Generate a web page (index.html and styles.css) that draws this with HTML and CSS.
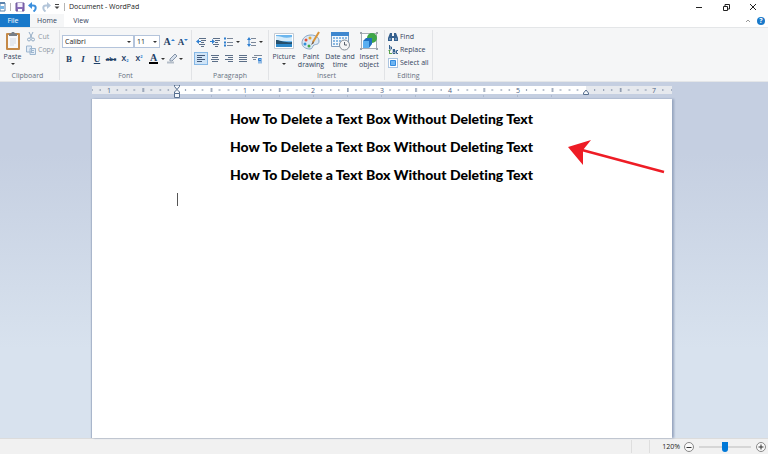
FILE: index.html
```html
<!DOCTYPE html>
<html lang="en">
<head>
    <meta charset="UTF-8">
    <meta name="viewport" content="width=device-width, initial-scale=1.0">
    <title>Document - WordPad</title>
    <link rel="stylesheet" href="styles.css">
</head>
<body>
    <header class="titlebar">
        <svg class="app-icon" width="6" height="12" viewBox="0 0 6 12"><path d="M0 2h5v8H0z" fill="#fff" stroke="#5b83ad"/><path d="M0 1h5v2H0z" fill="#5b83ad"/><path d="M0 5h4v3H0z" fill="#79b5e5"/></svg>
        <span class="divider"></span>
        <div class="quick">
            <button aria-label="Save"><svg width="10" height="10" viewBox="0 0 10 10"><path d="M1 1h8v8H1z" fill="#8a6cb8" stroke="#6b5598"/><path d="M2.500 1h5v4h-5z" fill="#f3eefa"/><path d="M3 7h4v2.500H3z" fill="#fff"/></svg></button>
            <button aria-label="Undo"><svg width="10" height="10" viewBox="0 0 10 10"><path d="M2 3.500h3c3.500 0 3.500 4 .5 6" fill="none" stroke="#3b8fdd" stroke-width="2"/><path d="M0 3.500L4 0v7z" fill="#3b8fdd"/></svg></button>
            <button aria-label="Redo"><svg width="10" height="10" viewBox="0 0 10 10"><path d="M8 3.500H5c-3.500 0-3.500 4-.5 6" fill="none" stroke="#b3c5d9" stroke-width="2"/><path d="M10 3.500L6 0v7z" fill="#b3c5d9"/></svg></button>
            <button aria-label="Customize"><svg width="6" height="6" viewBox="0 0 6 6"><path d="M1 .5h4" stroke="#444"/><path d="M.5 2.500h5L3 5z" fill="#444"/></svg></button>
        </div>
        <span class="divider"></span>
        <h1 class="title">Document - WordPad</h1>
        <div class="window-buttons">
            <button aria-label="Minimize"><svg width="8" height="8" viewBox="0 0 8 8"><path d="M1 4.500h6" stroke="#222"/></svg></button>
            <button aria-label="Restore"><svg width="8" height="8" viewBox="0 0 8 8"><path d="M1.500 3.500h4v4h-4zM3 3V1.500h4.500V6H6" fill="none" stroke="#222"/></svg></button>
            <button aria-label="Close"><svg width="8" height="8" viewBox="0 0 8 8"><path d="M1 1l6 6M7 1L1 7" stroke="#222"/></svg></button>
        </div>
    </header>

    <nav class="tabs">
        <button class="tab file">File</button>
        <button class="tab active">Home</button>
        <button class="tab view">View</button>
        <div class="tab-tools">
            <button aria-label="Collapse ribbon"><svg width="6" height="6" viewBox="0 0 6 6"><path d="M1 4l2-2 2 2" fill="none" stroke="#999"/></svg></button>
            <button class="help" aria-label="Help">?</button>
        </div>
    </nav>

    <main class="ribbon">
        <section class="group clipboard">
            <div class="group-body">
                <button class="big paste">
                    <svg width="18" height="20" viewBox="0 0 18 20"><rect x="2" y="2" width="14" height="17" rx="1" fill="#c58a48"/><path d="M4 4h10v13H4z" fill="#f7f8fa"/><path d="M5 5V2.500h2L8 1h2l1 1.500h2V5z" fill="#777f88"/><path d="M6 8h6M6 10h6M6 12h6M6 14h4" stroke="#d2d9e2"/></svg>
                    <span>Paste</span>
                    <i class="arrow"></i>
                </button>
                <div class="stack muted">
                    <button class="line"><svg width="10" height="10" viewBox="0 0 10 10"><path d="M3 0l3 6M7 0L4 6" stroke="#92abc4"/><circle cx="3" cy="7.500" r="1.500" fill="none" stroke="#92abc4"/><circle cx="7" cy="7.500" r="1.500" fill="none" stroke="#92abc4"/></svg><span>Cut</span></button>
                    <button class="line"><svg width="10" height="10" viewBox="0 0 10 10"><path d="M.5 1h5v6h-5zM4 3.500h5.500v6H4z" fill="#e4edf7" stroke="#9db6cf"/><path d="M5 5.500h3M5 7.500h3" stroke="#9db6cf"/></svg><span>Copy</span></button>
                </div>
            </div>
            <h2>Clipboard</h2>
        </section>

        <section class="group font">
            <div class="group-body rows">
                <div class="row combos">
                    <label class="combo family"><select aria-label="Font family"><option>Calibri</option></select><i class="arrow"></i></label>
                    <label class="combo size"><select aria-label="Font size"><option>11</option></select><i class="arrow"></i></label>
                    <button class="glyph grow" aria-label="Grow font">A<svg width="4" height="8" viewBox="0 0 4 8"><path d="M0 3l2-2 2 2z" fill="#2f7fd0"/></svg></button>
                    <button class="glyph shrink" aria-label="Shrink font">A<svg width="4" height="8" viewBox="0 0 4 8"><path d="M0 1h4L2 3z" fill="#2f7fd0"/></svg></button>
                </div>
                <div class="row styles">
                    <button class="glyph"><b>B</b></button>
                    <button class="glyph"><em>I</em></button>
                    <button class="glyph"><u>U</u></button>
                    <button class="glyph small"><s>abc</s></button>
                    <button class="glyph small">X<sub>2</sub></button>
                    <button class="glyph small">X<sup>2</sup></button>
                    <button class="glyph color">A</button>
                    <i class="arrow"></i>
                    <button class="glyph" aria-label="Highlight"><svg width="11" height="11" viewBox="0 0 11 11"><path d="M3 6l5-5 2 2-5 5H3z" fill="#d7e0ec" stroke="#8494a8"/><path d="M0 9.500h7" stroke="#b5bec9" stroke-width="2"/></svg></button>
                    <i class="arrow"></i>
                </div>
            </div>
            <h2>Font</h2>
        </section>

        <section class="group paragraph">
            <div class="group-body rows">
                <div class="row">
                    <button class="tool" aria-label="Decrease indent"><svg width="10" height="10" viewBox="0 0 10 10"><path d="M3 1.500h7M5 3.500h5M5 5.500h3M3 7.500h6M5 9.500h3" stroke="#5c6f88"/><path d="M0 4.500L3 2v5z" fill="#2f7fd0"/><path d="M2 4.500h3" stroke="#2f7fd0"/></svg></button>
                    <button class="tool" aria-label="Increase indent"><svg width="10" height="10" viewBox="0 0 10 10"><path d="M3 1.500h7M5 3.500h5M5 5.500h3M3 7.500h6M5 9.500h3" stroke="#5c6f88"/><path d="M5 4.500L2 2v5z" fill="#2f7fd0"/><path d="M0 4.500h3" stroke="#2f7fd0"/></svg></button>
                    <button class="tool" aria-label="Bullets"><svg width="10" height="10" viewBox="0 0 10 10"><path d="M3 1.500h6M3 5.500h6M3 8.500h6" stroke="#7b8798"/><path d="M0 1.500h2M0 5.500h2M0 8.500h2" stroke="#2f7fd0" stroke-width="2"/></svg></button>
                    <i class="arrow"></i>
                    <button class="tool spaced" aria-label="Line spacing"><svg width="10" height="10" viewBox="0 0 10 10"><path d="M4 1.500h5M4 5.500h5M4 8.500h5" stroke="#7b8798"/><path d="M0 3l2-3 2 3zM0 7h4l-2 3z" fill="#2f7fd0"/><path d="M2 2v6" stroke="#2f7fd0"/></svg></button>
                    <i class="arrow"></i>
                </div>
                <div class="row">
                    <button class="tool selected" aria-label="Align left"><svg width="10" height="8" viewBox="0 0 10 8"><path d="M1 .5h8M1 2.500h5M1 4.500h8M1 6.500h5" stroke="#43597a"/></svg></button>
                    <button class="tool" aria-label="Center"><svg width="10" height="8" viewBox="0 0 10 8"><path d="M1 .5h8M2 2.500h6M1 4.500h8M2 6.500h6" stroke="#5c6f88"/></svg></button>
                    <button class="tool" aria-label="Align right"><svg width="10" height="8" viewBox="0 0 10 8"><path d="M1 .5h8M4 2.500h5M1 4.500h8M4 6.500h5" stroke="#5c6f88"/></svg></button>
                    <button class="tool" aria-label="Justify"><svg width="10" height="8" viewBox="0 0 10 8"><path d="M1 .5h8M1 2.500h8M1 4.500h8M1 6.500h8" stroke="#5c6f88"/></svg></button>
                    <button class="tool" aria-label="Paragraph"><svg width="10" height="10" viewBox="0 0 10 10"><path d="M2 1.500h8M0 3.500h5M1 5.500h3" stroke="#7b8798"/><path d="M9 4.500H6.500v2H9M7 4v5.500M9 4v5.500" fill="none" stroke="#2f7fd0"/></svg></button>
                </div>
            </div>
            <h2>Paragraph</h2>
        </section>

        <section class="group insert">
            <div class="group-body">
                <button class="big">
                    <svg width="20" height="20" viewBox="0 0 20 20"><path d="M.5 2.500h19v15H.5z" fill="#fff" stroke="#c3cbd4"/><path d="M2 4h16v12H2z" fill="#6bb6ee"/><path d="M2 5c5 0 8 3 16 1v4H2z" fill="#d5ecfb"/><path d="M2 9c4 0 8 3 16 2v2H2z" fill="#25506e"/><path d="M2 13h16v3H2z" fill="#2c87c9"/></svg>
                    <span>Picture</span>
                    <i class="arrow"></i>
                </button>
                <button class="big paint">
                    <svg width="20" height="20" viewBox="0 0 20 20"><path d="M10 4C4 4 1 8 1 12s4 6 8 6c3 0 2-3 4-4s5 0 5-4-4-6-8-6z" fill="#dce9f5" stroke="#87a5c4"/><circle cx="5" cy="9" r="1.500" fill="#e0503c"/><circle cx="9" cy="7" r="1.500" fill="#e7a52d"/><circle cx="4" cy="13" r="1.500" fill="#338fd8"/><circle cx="8" cy="15" r="1.500" fill="#43a747"/><path d="M18 1l-6 10" stroke="#d99438" stroke-width="2"/><path d="M12 10l-2 4 3-2z" fill="#735236"/></svg>
                    <span>Paint<br>drawing</span>
                </button>
                <button class="big date">
                    <svg width="20" height="20" viewBox="0 0 20 20"><path d="M1.500 1.500h17v14h-17z" fill="#f3f8fd" stroke="#7f9dbe"/><path d="M1 1h18v4H1z" fill="#3e87cf"/><path d="M3 7h14M3 10h14M3 13h10" stroke="#89b9e3" stroke-width="2" stroke-dasharray="2 1"/><circle cx="14.500" cy="14" r="5" fill="#f5f6f7" stroke="#848c95"/><path d="M14.500 11v3H17" fill="none" stroke="#59626e"/></svg>
                    <span>Date and<br>time</span>
                </button>
                <button class="big object">
                    <svg width="20" height="20" viewBox="0 0 20 20"><path d="M2.500 2.500h15v15h-15z" fill="#fff" stroke="#a6adb5"/><circle cx="13" cy="7" r="5" fill="#3fa648"/><path d="M4 10l3-3h6v6l-3 4H4z" fill="#1f6fbe"/><path d="M4 10h6v7H4z" fill="#5aaff0"/><path d="M1 1h2v2H1zM17 1h2v2h-2zM1 17h2v2H1zM17 17h2v2h-2z" fill="#9ba3ac"/></svg>
                    <span>Insert<br>object</span>
                </button>
            </div>
            <h2>Insert</h2>
        </section>

        <section class="group editing">
            <div class="group-body stack">
                <button class="line"><svg width="10" height="10" viewBox="0 0 10 10"><path d="M2 1h2v3h2V1h2l2 5v3H6V6H4v3H0V6z" fill="#35608e"/><path d="M1 7h2M7 7h2" stroke="#9bc3e7"/></svg><span>Find</span></button>
                <button class="line"><svg width="10" height="10" viewBox="0 0 10 10"><path d="M1.500 0v4h2V2h-2M7 4.500h-2v1h2v3H5v-2h2M10 5.500H8.500v3H10" fill="none" stroke="#35608e"/><path d="M0 6h3L1.500 4.500zM1 6h1v2h2v1H1z" fill="#58a04c"/></svg><span>Replace</span></button>
                <button class="line"><svg width="10" height="10" viewBox="0 0 10 10"><path d="M.5 .5h9v9h-9z" fill="#fff" stroke="#5d8fc4" stroke-dasharray="1 1"/><path d="M2.500 2.500h5v5h-5z" fill="#6db3f0" stroke="#338be0"/></svg><span>Select all</span></button>
            </div>
            <h2>Editing</h2>
        </section>
    </main>

    <div class="workspace">
        <div class="sheet">
            <svg class="ruler" width="580" height="13" viewBox="0 0 580 13">
                <defs>
                    <pattern id="inch" x="85" y="0" width="68.2" height="13" patternUnits="userSpaceOnUse">
                        <path d="M8.500 4v2M17.500 4v2M25.500 4v2M42.500 4v2M51.500 4v2M59.500 4v2" stroke="#8594ab"/>
                        <path d="M34.500 3v4" stroke="#4f6484"/>
                    </pattern>
                </defs>
                <rect y="1" width="580" height="8" fill="#e6e9ee"/>
                <rect x="85" y="1" width="409" height="8" fill="#fff"/>
                <rect y="0" width="580" height="13" fill="url(#inch)"/>
                <path d="M119.500 10v2M153.500 10v2M187.500 10v2M221.500 10v2M255.500 10v2M289.500 10v2M323.500 10v2M357.500 10v2M391.500 10v2M425.500 10v2M459.500 10v2" stroke="#adb9ce"/>
                <g class="numbers">
                    <text x="17" y="8">1</text>
                    <text x="153" y="8">1</text>
                    <text x="221" y="8">2</text>
                    <text x="290" y="8">3</text>
                    <text x="358" y="8">4</text>
                    <text x="426" y="8">5</text>
                    <text x="562" y="8">7</text>
                </g>
                <path d="M82.500 0h5v1.500L85 4.500l-2.500-3zM82.500 8.500V7L85 4.500 87.500 7v1.500zM82.500 8.500h5v4h-5z" fill="#f4f7fb" stroke="#566e8e"/>
                <path d="M491.500 9.500V8l2.500-3 2.500 3v1.500z" fill="#f4f7fb" stroke="#566e8e"/>
            </svg>
            <article class="page">
                <p>How To Delete a Text Box Without Deleting Text</p>
                <p>How To Delete a Text Box Without Deleting Text</p>
                <p>How To Delete a Text Box Without Deleting Text</p>
                <div class="caret"></div>
                <svg class="pointer" width="98" height="36" viewBox="0 0 98 36"><path d="M14 11l82 22" stroke="#ee1c25" stroke-width="2.400"/><path d="M0 8l23-7-8 10 0 15z" fill="#ee1c25"/></svg>
            </article>
        </div>
    </div>

    <footer class="statusbar">
        <span class="cell"></span>
        <label class="zoom" for="zoom">120%</label>
        <button aria-label="Zoom out"><svg width="10" height="10" viewBox="0 0 10 10"><circle cx="5" cy="5" r="4.500" fill="#fafafa" stroke="#888"/><path d="M2.500 5.500h5" stroke="#333"/></svg></button>
        <input type="range" id="zoom" min="0" max="100" value="50">
        <button aria-label="Zoom in"><svg width="10" height="10" viewBox="0 0 10 10"><circle cx="5" cy="5" r="4.500" fill="#fafafa" stroke="#888"/><path d="M2.500 5h5M5 2.500v5" stroke="#333"/></svg></button>
    </footer>
</body>
</html>
```
FILE: styles.css
```css
* {
    box-sizing: border-box;
}
body {
    margin: 0;
    height: 100vh;
    display: flex;
    flex-direction: column;
    font-family: "Open Sans", "Noto Sans", sans-serif;
    font-size: 7px;
    line-height: 8px;
    color: #33435c;
    background: #fff;
}
button {
    display: flex;
    align-items: center;
    justify-content: center;
    padding: 0;
    border: none;
    background: none;
    color: inherit;
    font: inherit;
}
svg {
    display: block;
    flex: none;
}
h1,
h2,
p {
    margin: 0;
    font-size: 7px;
    font-weight: normal;
}
.arrow {
    flex: none;
    width: 4px;
    border: 2px solid transparent;
    border-top-color: #333;
    border-bottom: none;
}

/* title bar */
.titlebar {
    display: flex;
    align-items: center;
    height: 14px;
    color: #222;
}
.divider {
    width: 1px;
    height: 8px;
    margin: 0 4px;
    background: #b5b5b5;
}
.quick {
    display: flex;
    gap: 3px;
}
.title {
    flex: 1;
}
.window-buttons {
    display: flex;
    gap: 19px;
    padding-right: 11px;
}

/* tabs */
.tabs {
    display: flex;
    height: 13px;
}
.tab {
    width: 34px;
}
.file {
    width: 30px;
    padding-right: 4px;
    background: #1979ca;
    color: #fff;
}
.active {
    background: #f5f6f7;
}
.tab-tools {
    display: flex;
    align-items: center;
    gap: 6px;
    margin-left: auto;
    padding-right: 3px;
}
.help {
    width: 8px;
    height: 8px;
    border-radius: 50%;
    background: #1979ca;
    color: #fff;
    font-weight: bold;
}

/* ribbon */
.ribbon {
    display: flex;
    height: 55px;
    background: #f5f6f7;
    border-top: 1px solid #e4e6e8;
    border-bottom: 1px solid #e4e6e8;
}
.group {
    display: flex;
    flex-direction: column;
    margin: 2px 0 1px;
    border-right: 1px solid #e1e3e6;
}
.group h2 {
    text-align: center;
    color: #687383;
}
.group-body {
    display: flex;
    height: 42px;
}
.clipboard {
    width: 60px;
}
.clipboard h2 {
    padding-right: 4px;
}
.font {
    width: 132px;
}
.paragraph {
    width: 77px;
}
.insert {
    width: 116px;
}
.editing {
    width: 48px;
}
.big {
    flex-direction: column;
    justify-content: flex-start;
    width: 30px;
    padding-top: 1px;
}
.big svg {
    margin-bottom: 2px;
}
.big .arrow {
    margin-top: 2px;
}
.paste {
    width: 25px;
}
.stack {
    display: flex;
    flex-direction: column;
    gap: 3px;
    padding: 2px 0 0 3px;
}
.line {
    justify-content: flex-start;
    gap: 2px;
    height: 10px;
    white-space: nowrap;
}
.stack.muted {
    padding-left: 1px;
    color: #8d97a3;
}
.rows {
    flex-direction: column;
    gap: 4px;
    padding: 5px 0 0 2px;
}
.row {
    display: flex;
    align-items: center;
    height: 13px;
}
.combo {
    position: relative;
    height: 13px;
}
.combo select {
    appearance: none;
    width: 100%;
    height: 13px;
    padding: 0 2px;
    border: 1px solid #b4c4db;
    border-radius: 0;
    background: #fff;
    color: #222;
    font: inherit;
}
.combo .arrow {
    position: absolute;
    top: 6px;
    right: 3px;
}
.family {
    width: 72px;
}
.size {
    width: 26px;
}
.glyph {
    width: 14px;
    color: #1e3f66;
    font-family: "Liberation Serif", serif;
    font-size: 9px;
    font-weight: bold;
}
.grow {
    margin-left: 2px;
    font-size: 10px;
}
.small {
    font-family: "Open Sans", sans-serif;
    font-size: 7px;
}
.glyph s {
    font-size: 6px;
}
.glyph sub,
.glyph sup {
    color: #2f7fd0;
    font-size: 4px;
    line-height: 4px;
}
.glyph sub {
    align-self: flex-end;
}
.glyph sup {
    align-self: flex-start;
}
.color {
    width: 9px;
    margin: 0 3px;
    border-bottom: 2px solid #000;
    font-size: 10px;
}
.tool {
    width: 14px;
    height: 13px;
}
.spaced {
    margin-left: 5px;
}
.selected {
    border: 1px solid #86b8e6;
    background: #cfe4f7;
}

/* insert buttons */
.paint {
    width: 24px;
}
.date {
    width: 34px;
}
.object {
    width: 24px;
}

/* document area */
.workspace {
    flex: 1;
    padding: 3px 4px 0 0;
    background: linear-gradient(#c5cfe1 0, #c5cfe1 20%, #d8e2ee 75%);
}
.sheet {
    display: flex;
    flex-direction: column;
    max-width: 580px;
    height: 100%;
    margin: 0 auto;
}
.ruler {
    margin-bottom: 1px;
}
.numbers {
    fill: #4f6484;
    font-size: 7px;
    text-anchor: middle;
}
.page {
    position: relative;
    flex: 1;
    padding: 6px 86px 0 85px;
    background: #fff;
    box-shadow: 2px 0 2px #97a6bf, -1px 0 1px #a9b6cb;
}
.page p {
    color: #000;
    font-family: Lato, "Open Sans", sans-serif;
    font-size: 14px;
    font-weight: 900;
    font-variant-ligatures: none;
    line-height: 28px;
    text-align: center;
    white-space: nowrap;
}
.caret {
    width: 1px;
    height: 13px;
    margin-top: 4px;
    background: #555;
}
.pointer {
    position: absolute;
    top: 40px;
    right: 6px;
}

/* status bar */
.statusbar {
    display: flex;
    align-items: center;
    justify-content: flex-end;
    gap: 4px;
    height: 16px;
    padding-right: 2px;
    background: #f1f1f1;
    border-top: 1px solid #dcdcdc;
}
.cell {
    width: 19px;
    height: 13px;
    margin-right: 8px;
    border: solid #dedede;
    border-width: 0 1px;
}
.zoom {
    color: #222;
}
.statusbar input {
    appearance: none;
    width: 52px;
    height: 10px;
    margin: 0 1px;
    background: linear-gradient(#d6d6d6, #d6d6d6) center / 100% 2px no-repeat;
}
.statusbar input::-webkit-slider-thumb {
    appearance: none;
    width: 6px;
    height: 10px;
    border-radius: 0 0 3px 3px;
    background: #0078d7;
}
```
